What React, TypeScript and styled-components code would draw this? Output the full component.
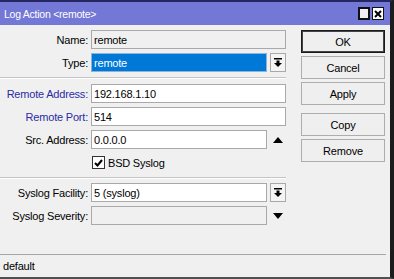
import React from "react";
import styled, { createGlobalStyle } from "styled-components";

const GlobalStyle = createGlobalStyle`
  html, body {
    margin: 0;
    padding: 0;
    background: #f0f0f0;
  }
  * {
    box-sizing: border-box;
  }
`;

const Window = styled.div`
  width: 394px;
  height: 279px;
  display: flex;
  flex-direction: column;
  background: #f0f0f0;
  border-top: 2px solid #262660;
  border-right: 4px solid #1c1c1c;
  border-bottom: 2px solid #505050;
  font-family: "Liberation Sans", Arial, sans-serif;
  font-size: 11px;
  letter-spacing: -0.2px;
  color: #000;
  overflow: hidden;
`;

const TitleBar = styled.div`
  height: 23px;
  flex: none;
  display: flex;
  align-items: center;
  justify-content: space-between;
  padding: 0 6px 0 4px;
  background: #7378d6;
  color: #fff;
  font-size: 10.5px;
  letter-spacing: -0.25px;
`;

const TitleButtons = styled.div`
  display: flex;
  gap: 2px;
`;

const MaxButton = styled.div`
  width: 12px;
  height: 13px;
  background: #f2eef4;
  border: 2px solid #111;
`;

const CloseButton = styled.div`
  width: 12px;
  height: 13px;
  background: #fff;
  border: 1px solid #111;
  display: flex;
  align-items: center;
  justify-content: center;
`;

const Main = styled.div`
  flex: 1;
  display: flex;
  gap: 15px;
  padding-top: 5px;
`;

const Form = styled.div`
  width: 286px;
  display: flex;
  flex-direction: column;
`;

const Group = styled.div`
  display: flex;
  flex-direction: column;
  gap: 4px;
`;

const Row = styled.div`
  display: flex;
  align-items: center;
  height: 19px;
  gap: 3px;
`;

const Label = styled.div<{ $blue?: boolean }>`
  width: 88px;
  text-align: right;
  white-space: nowrap;
  color: ${(p) => (p.$blue ? "#2b2ba6" : "#000")};
`;

const Field = styled.div<{ $variant?: "white" | "grey" | "selected"; $short?: boolean }>`
  width: ${(p) => (p.$short ? "176px" : "195px")};
  height: 19px;
  display: flex;
  align-items: center;
  padding-left: 2px;
  border: 1px solid ${(p) => (p.$variant === "selected" ? "#8fb4d8" : "#a9a9a9")};
  background: ${(p) =>
    p.$variant === "selected" ? "#0078d7" : p.$variant === "grey" ? "#f0f0f0" : "#fff"};
  color: ${(p) => (p.$variant === "selected" ? "#fff" : "#000")};
`;

const DropButton = styled.div`
  width: 16px;
  height: 19px;
  border: 1px solid #a9a9a9;
  background: #f4f4f4;
  display: flex;
  align-items: center;
  justify-content: center;
`;

const Arrow = styled.div`
  width: 16px;
  display: flex;
  align-items: center;
  justify-content: center;
`;

const CheckRow = styled.div`
  display: flex;
  align-items: center;
  height: 19px;
  padding-left: 92px;
  gap: 3px;
`;

const CheckBox = styled.div`
  width: 13px;
  height: 13px;
  border: 1px solid #333;
  background: #fff;
  display: flex;
  align-items: center;
  justify-content: center;
`;

const Separator = styled.div<{ $after?: number }>`
  height: 2px;
  margin: 5px 0 ${(p) => p.$after ?? 5}px;
  border-top: 1px solid #c4c4c4;
  border-bottom: 1px solid #fff;
`;

const ButtonColumn = styled.div`
  width: 84px;
  display: flex;
  flex-direction: column;
  gap: 3px;
`;

const Button = styled.div<{ $primary?: boolean; $spaced?: boolean }>`
  height: 23px;
  display: flex;
  align-items: center;
  justify-content: center;
  background: #efefef;
  border: 1px solid ${(p) => (p.$primary ? "#1a1a1a" : "#adadad")};
  box-shadow: ${(p) => (p.$primary ? "inset 0 0 0 1px #444" : "none")};
  margin-top: ${(p) => (p.$spaced ? "5px" : "0")};
`;

const StatusBar = styled.div`
  height: 23px;
  flex: none;
  margin-right: 4px;
  border-top: 1px solid #a6a6a6;
  display: flex;
  align-items: center;
  padding-left: 3px;
  padding-bottom: 1px;
`;

const DropIcon = () => (
  <svg width="8" height="9" viewBox="0 0 8 9">
    <rect x="0" y="0" width="8" height="1.5" fill="#000" />
    <rect x="2.5" y="2.5" width="3" height="2.5" fill="#000" />
    <polygon points="0,5 8,5 4,9" fill="#000" />
  </svg>
);

const UpTriangle = () => (
  <svg width="10" height="6" viewBox="0 0 10 6">
    <polygon points="0,6 10,6 5,0" fill="#000" />
  </svg>
);

const DownTriangle = () => (
  <svg width="10" height="6" viewBox="0 0 10 6">
    <polygon points="0,0 10,0 5,6" fill="#000" />
  </svg>
);

export default function App() {
  return (
    <>
      <GlobalStyle />
      <Window>
        <TitleBar>
          <span>Log Action &lt;remote&gt;</span>
          <TitleButtons>
            <MaxButton />
            <CloseButton>
              <svg width="8" height="8" viewBox="0 0 8 8">
                <path d="M1 1L7 7M7 1L1 7" stroke="#000" strokeWidth="2" />
              </svg>
            </CloseButton>
          </TitleButtons>
        </TitleBar>
        <Main>
          <Form>
            <Group>
              <Row>
                <Label>Name:</Label>
                <Field $variant="grey">remote</Field>
              </Row>
              <Row>
                <Label>Type:</Label>
                <Field $variant="selected" $short>
                  remote
                </Field>
                <DropButton>
                  <DropIcon />
                </DropButton>
              </Row>
            </Group>
            <Separator />
            <Group>
              <Row>
                <Label $blue>Remote Address:</Label>
                <Field>192.168.1.10</Field>
              </Row>
              <Row>
                <Label $blue>Remote Port:</Label>
                <Field>514</Field>
              </Row>
              <Row>
                <Label>Src. Address:</Label>
                <Field $short>0.0.0.0</Field>
                <Arrow>
                  <UpTriangle />
                </Arrow>
              </Row>
              <CheckRow>
                <CheckBox>
                  <svg width="9" height="8" viewBox="0 0 9 8">
                    <path d="M1 4L3.5 6.5L8 1" stroke="#000" strokeWidth="2" fill="none" />
                  </svg>
                </CheckBox>
                <span>BSD Syslog</span>
              </CheckRow>
            </Group>
            <Separator $after={4} />
            <Group>
              <Row>
                <Label>Syslog Facility:</Label>
                <Field $short>5 (syslog)</Field>
                <DropButton>
                  <DropIcon />
                </DropButton>
              </Row>
              <Row>
                <Label>Syslog Severity:</Label>
                <Field $variant="grey" $short />
                <Arrow>
                  <DownTriangle />
                </Arrow>
              </Row>
            </Group>
          </Form>
          <ButtonColumn>
            <Button $primary>OK</Button>
            <Button>Cancel</Button>
            <Button>Apply</Button>
            <Button $spaced>Copy</Button>
            <Button>Remove</Button>
          </ButtonColumn>
        </Main>
        <StatusBar>default</StatusBar>
      </Window>
    </>
  );
}
